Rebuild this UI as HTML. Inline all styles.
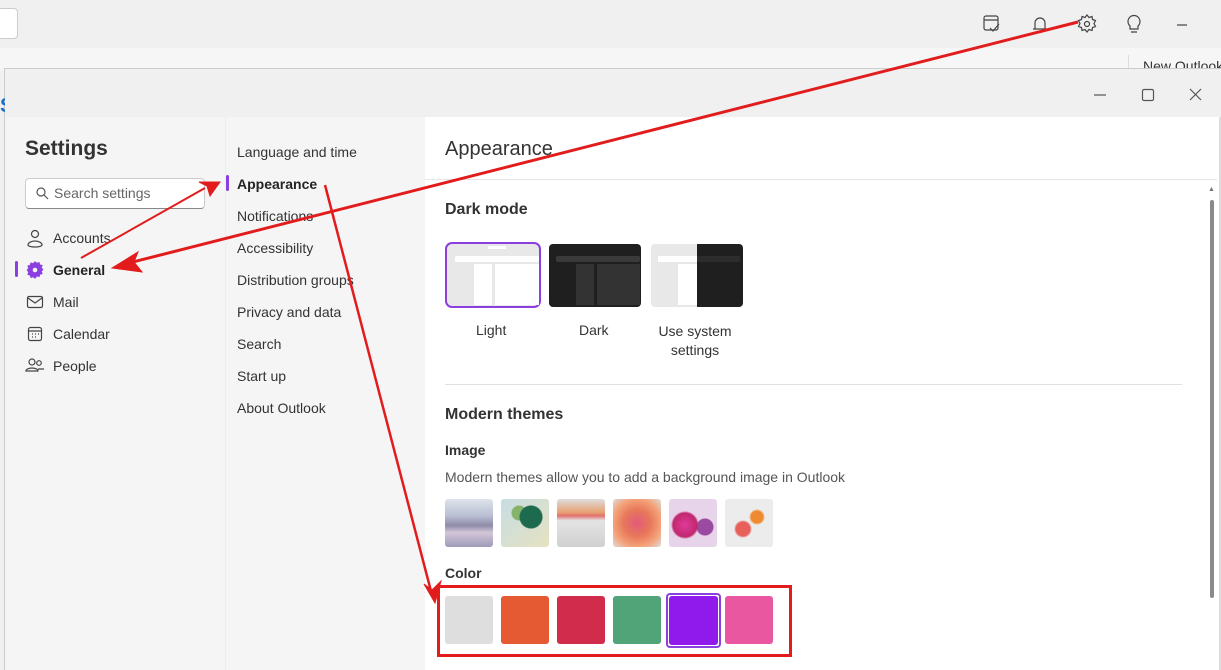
<!DOCTYPE html>
<html><head><meta charset="utf-8"><style>
*{margin:0;padding:0;box-sizing:border-box}
body{width:1221px;height:670px;overflow:hidden;background:#f0f0f0;font-family:"Segoe UI","Liberation Sans",sans-serif;color:#242424;position:relative}
.abs{position:absolute;white-space:nowrap}
.t{font-size:14px;color:#333}
</style></head><body>
<div class="abs" style="left:-10px;top:8px;width:28px;height:31px;background:#fff;border:1px solid #ccc;border-radius:4px"></div>
<div class="abs" style="left:0;top:48px;width:1221px;height:22px;background:#f6f6f6"></div>
<div class="abs" style="left:1128px;top:55px;width:1px;height:15px;background:#ddd"></div>
<div class="abs" style="left:1143px;top:58px;font-size:14px;color:#333">New Outlook</div>
<svg class="abs" style="left:980px;top:12px" width="210" height="24" fill="none" stroke="#444" stroke-width="1.2">
<rect x="4" y="4" width="14" height="14" rx="2"/><path d="M4 8h14M10 16l3 3 6-7"/>
<path d="M53 17h14M55 17v-6a5 5 0 0 1 10 0v6M58 20h4"/>
<circle cx="107" cy="12" r="2.5"/><path d="M107 3l2 2.5 3-1 .5 3 3 1-1.5 3 1.5 3-3 1-.5 3-3-1-2 2.5-2-2.5-3 1-.5-3-3-1 1.5-3-1.5-3 3-1 .5-3 3 1z"/>
<path d="M150 17v-3a6 6 0 1 1 8 0v3zM151 20h6"/>
<path d="M197 13h10"/>
</svg>
<div class="abs" style="left:4px;top:68px;width:1217px;height:602px;background:#f0f0f0;border:1px solid #ccc;border-right:none"></div>
<div class="abs" style="left:0;top:95px;width:5px;height:22px;overflow:hidden;color:#1a6fc4;font-weight:bold;font-size:20px;line-height:22px">S</div>
<svg class="abs" style="left:1090px;top:85px" width="120" height="20" fill="none" stroke="#555" stroke-width="1.2">
<path d="M4 10h12"/><rect x="52.5" y="4.5" width="11" height="11" rx="1.5"/><path d="M100 4l11 11M111 4l-11 11"/>
</svg>
<div class="abs" style="left:5px;top:117px;width:220px;height:553px;background:#f5f5f5"></div>
<div class="abs" style="left:225px;top:117px;width:200px;height:553px;background:#f5f5f5;border-left:1px solid #eee"></div>
<div class="abs" style="left:425px;top:117px;width:796px;height:553px;background:#fff"></div>
<div class="abs" style="left:425px;top:179px;width:792px;height:1px;background:#e6e6e6"></div>
<div class="abs" style="left:1219px;top:117px;width:2px;height:553px;background:#ddd"></div>
<div class="abs" style="left:1208px;top:186px;font-size:7px;color:#777">▲</div>
<div class="abs" style="left:1210px;top:200px;width:4px;height:398px;background:#8a8a8a;border-radius:2px"></div>
<div class="abs" style="left:25px;top:137px;font-size:21px;font-weight:600;color:#333">Settings</div>
<div class="abs" style="left:25px;top:178px;width:180px;height:31px;background:#fff;border:1px solid #ccc;border-bottom-color:#888;border-radius:4px"></div>
<svg class="abs" style="left:35px;top:186px" width="14" height="14" fill="none" stroke="#555" stroke-width="1.2"><circle cx="6" cy="6" r="4"/><path d="M9 9l4 4"/></svg>
<div class="abs t" style="left:54px;top:185px;color:#666">Search settings</div>
<svg class="abs" style="left:25px;top:228px" width="20" height="150" fill="none" stroke="#444" stroke-width="1.2">
<circle cx="10" cy="6" r="3.5"/><path d="M3 17a7 4 0 0 1 14 0v0a7 2 0 0 1-14 0z"/>
<path d="M10 34l1.8 1.5 2.2-.8.6 2.3 2.3.6-.8 2.2 1.5 1.8-1.5 1.8.8 2.2-2.3.6-.6 2.3-2.2-.8L10 50l-1.8-1.5-2.2.8-.6-2.3-2.3-.6.8-2.2L2.4 42l1.5-1.8-.8-2.2 2.3-.6.6-2.3 2.2.8z" fill="#8b3fe0" stroke="#8b3fe0"/><circle cx="10" cy="42" r="2.3" fill="#f5f5f5" stroke="none"/>
<rect x="2.5" y="68.5" width="15" height="11" rx="1.5"/><path d="M3 70l7 5 7-5"/>
<rect x="3.5" y="99.5" width="13" height="13" rx="2"/><path d="M4 103h12M7 106h1M10 106h1M13 106h1M7 109h1M10 109h1"/>
<circle cx="7" cy="134" r="3"/><circle cx="14" cy="135" r="2.3"/><path d="M1 143a6 3 0 0 1 12 0zM13 141h6"/>
</svg>
<div class="abs" style="left:15px;top:261px;width:3px;height:16px;background:#8b3fe0;border-radius:2px"></div>
<div class="abs t" style="left:53px;top:230px">Accounts</div>
<div class="abs t" style="left:53px;top:262px;font-weight:600;color:#242424">General</div>
<div class="abs t" style="left:53px;top:294px">Mail</div>
<div class="abs t" style="left:53px;top:326px">Calendar</div>
<div class="abs t" style="left:53px;top:358px">People</div>
<div class="abs" style="left:226px;top:175px;width:3px;height:16px;background:#8b3fe0;border-radius:2px"></div>
<div class="abs t" style="left:237px;top:144px">Language and time</div>
<div class="abs t" style="left:237px;top:176px;font-weight:600;color:#242424">Appearance</div>
<div class="abs t" style="left:237px;top:208px">Notifications</div>
<div class="abs t" style="left:237px;top:240px">Accessibility</div>
<div class="abs t" style="left:237px;top:272px">Distribution groups</div>
<div class="abs t" style="left:237px;top:304px">Privacy and data</div>
<div class="abs t" style="left:237px;top:336px">Search</div>
<div class="abs t" style="left:237px;top:368px">Start up</div>
<div class="abs t" style="left:237px;top:400px">About Outlook</div>
<div class="abs" style="left:445px;top:138px;font-size:20px;color:#333">Appearance</div>
<div class="abs" style="left:445px;top:201px;font-size:16px;font-weight:600;color:#333">Dark mode</div>
<svg class="abs" style="left:444px;top:241px" width="302" height="70">
<rect x="2" y="2" width="94" height="64" rx="6" fill="#e8e8e8" stroke="#8b3fe0" stroke-width="2"/>
<rect x="11" y="15" width="84" height="6" rx="2" fill="#fff"/><rect x="30" y="23" width="18" height="41" fill="#fff"/><rect x="51" y="23" width="44" height="41" fill="#fff"/><rect x="44" y="5" width="18" height="3" fill="#fff"/>
<rect x="105" y="3" width="92" height="63" rx="4" fill="#1f1f1f"/>
<rect x="112" y="15" width="84" height="6" rx="2" fill="#3a3a3a"/><rect x="132" y="23" width="18" height="41" fill="#333"/><rect x="153" y="23" width="43" height="41" fill="#333"/>
<rect x="207" y="3" width="92" height="63" rx="4" fill="#e8e8e8"/>
<path d="M253 3h42a4 4 0 0 1 4 4v55a4 4 0 0 1-4 4h-42z" fill="#1f1f1f"/>
<rect x="214" y="15" width="39" height="6" fill="#fff"/><rect x="253" y="15" width="43" height="6" fill="#2c2c2c"/><rect x="234" y="23" width="19" height="41" fill="#fff"/>
</svg>
<div class="abs t" style="left:476px;top:322px">Light</div>
<div class="abs t" style="left:579px;top:322px">Dark</div>
<div class="abs t" style="left:645px;top:322px;text-align:center;width:100px;line-height:19px;white-space:normal">Use system<br>settings</div>
<div class="abs" style="left:445px;top:384px;width:737px;height:1px;background:#e0e0e0"></div>
<div class="abs" style="left:445px;top:406px;font-size:16px;font-weight:600;color:#333">Modern themes</div>
<div class="abs t" style="left:445px;top:442px;font-weight:600">Image</div>
<div class="abs t" style="left:445px;top:469px;color:#555">Modern themes allow you to add a background image in Outlook</div>
<div class="abs" style="left:445px;top:499px;width:48px;height:48px;border-radius:3px;background:linear-gradient(180deg,#dfe3ec 0,#b9bfd3 35%,#8f8aa8 55%,#d3c6d8 70%,#9d9ab8 100%)"></div>
<div class="abs" style="left:501px;top:499px;width:48px;height:48px;border-radius:3px;background:radial-gradient(circle at 30px 18px,#1d6a4f 0,#1d6a4f 11px,transparent 12px),radial-gradient(circle at 18px 14px,#86b36a 0 7px,transparent 8px),linear-gradient(135deg,#c7dde3,#e6e2c0)"></div>
<div class="abs" style="left:557px;top:499px;width:48px;height:48px;border-radius:3px;background:linear-gradient(180deg,#ddd 0,#e8a070 28%,#e07070 35%,#e4e4e4 45%,#d0d0d0 100%)"></div>
<div class="abs" style="left:613px;top:499px;width:48px;height:48px;border-radius:3px;background:radial-gradient(circle at 24px 24px,#e25a7a 0,#e8785a 40%,#f4a27a 70%,#ddd 100%)"></div>
<div class="abs" style="left:669px;top:499px;width:48px;height:48px;border-radius:3px;background:radial-gradient(circle at 16px 26px,#e03a9a 0,#c0286e 12px,transparent 14px),radial-gradient(circle at 36px 28px,#9a4aa0 0 8px,transparent 9px),#e8d4ea"></div>
<div class="abs" style="left:725px;top:499px;width:48px;height:48px;border-radius:3px;background:radial-gradient(circle at 32px 18px,#f08a30 0,#f08a30 6px,transparent 8px),radial-gradient(circle at 18px 30px,#e8605a 0 7px,transparent 9px),#ececec"></div>
<div class="abs t" style="left:445px;top:565px;font-weight:600">Color</div>
<div class="abs" style="left:445px;top:596px;width:48px;height:48px;border-radius:3px;background:#dedede"></div>
<div class="abs" style="left:501px;top:596px;width:48px;height:48px;border-radius:3px;background:#e55a32"></div>
<div class="abs" style="left:557px;top:596px;width:48px;height:48px;border-radius:3px;background:#d12c4c"></div>
<div class="abs" style="left:613px;top:596px;width:48px;height:48px;border-radius:3px;background:#50a477"></div>
<div class="abs" style="left:666px;top:593px;width:55px;height:55px;border-radius:4px;border:2px solid #8b3fe0;background:#fff"></div>
<div class="abs" style="left:669px;top:596px;width:49px;height:49px;border-radius:3px;background:#9019ec"></div>
<div class="abs" style="left:725px;top:596px;width:48px;height:48px;border-radius:3px;background:#e957a1"></div>
<div class="abs" style="left:437px;top:585px;width:355px;height:72px;border:3px solid #e21c1c"></div>
<svg class="abs" style="left:0;top:0" width="1221" height="670">
<g fill="#e21c1c" stroke="#e21c1c">
<path d="M1078 22L125 264" stroke-width="3"/>
<polygon points="112,268 138,252 134,262 142,272" stroke-width="1"/>
<path d="M81 258L205 188" stroke-width="2"/>
<polygon points="220,182 199,182 207,186 210,196" stroke-width="1"/>
<path d="M325 185L432 595" stroke-width="2.5"/>
<polygon points="435,603 424,584 432,590 441,581" stroke-width="1"/>
</g>
</svg>
</body></html>
